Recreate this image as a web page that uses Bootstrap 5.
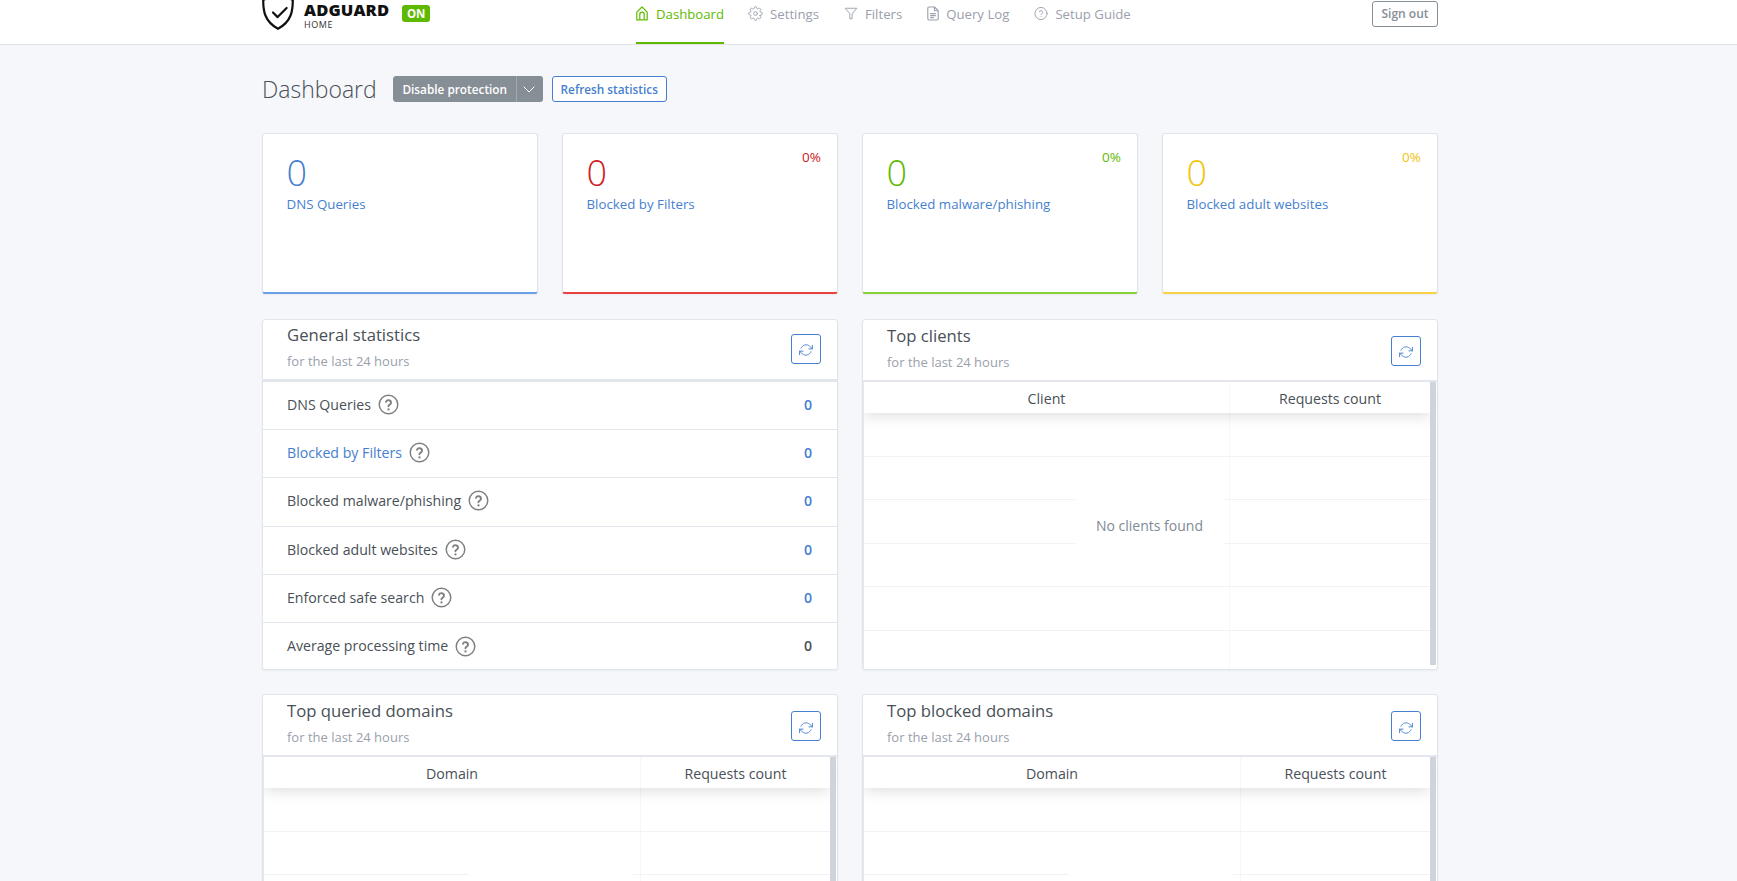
<!DOCTYPE html>
<html lang="en">
<head>
  <meta charset="UTF-8">
  <title>AdGuard Home</title>
  <link href="https://cdn.jsdelivr.net/npm/bootstrap@5.3.3/dist/css/bootstrap.min.css" rel="stylesheet">
  <style>
    html, body {
      height: 881px;
      overflow: hidden;
    }
    body {
      background: #f5f7fb;
      color: #495057;
      font-family: "Open Sans", "Liberation Sans", sans-serif;
      font-size: 14px;
    }
    .app-shell {
      width: 1700px;
    }
    .app-shell .container {
      max-width: 1200px;
    }
    .top-bar {
      height: 45px;
      background: #fff;
      border-bottom: 1px solid #dfe2ea;
      overflow: hidden;
    }
    .brand {
      width: 374px;
      color: #111;
    }
    .brand svg {
      margin-top: -5px;
    }
    .brand-text {
      margin-left: 10px;
      margin-top: 1px;
    }
    .brand-name {
      font-size: 16.6px;
      font-weight: 800;
      line-height: 17px;
      letter-spacing: .1px;
    }
    .brand-sub {
      font-size: 9px;
      line-height: 10px;
      margin-top: 2px;
      letter-spacing: .6px;
      color: #333;
    }
    .on-tag {
      margin-left: 13px;
      margin-top: 5px;
      width: 28px;
      height: 17px;
      line-height: 17px;
      text-align: center;
      background: #5eba00;
      color: #fff;
      font-size: 11.5px;
      font-weight: 700;
      border-radius: 3px;
    }
    .tab-link {
      display: flex;
      gap: 7px;
      height: 44px;
      padding-top: 5px;
      margin-right: 25px;
      color: #9aa0ac;
      font-size: 13.2px;
      line-height: 18px;
      text-decoration: none;
      border-bottom: 2px solid transparent;
    }
    .tab-link svg {
      flex: none;
      margin-top: 1px;
    }
    .tab-link.is-active {
      gap: 8px;
      margin-right: 24px;
      color: #5eba00;
      border-bottom-color: #5eba00;
    }
    .btn-out {
      margin-top: 1px;
      width: 66px;
      height: 26px;
      padding: 0;
      font-size: 12px;
      font-weight: 600;
      line-height: 24px;
      color: #868e96;
      border: 1px solid #868e96;
      border-radius: 3px;
    }
    .page-head {
      padding-top: 31px;
      margin-bottom: 31px;
      height: 57px;
    }
    .page-title {
      font-size: 23px;
      font-weight: 300;
      line-height: 26px;
      margin: 0 16px 0 0;
      color: #495057;
    }
    .btn-head {
      height: 26px;
      padding: 0;
      font-size: 11.8px;
      font-weight: 600;
      line-height: 24px;
      white-space: nowrap;
      border-radius: 3px;
    }
    .btn-disable {
      width: 124px;
      background: #868e96;
      border-color: #868e96;
      color: #fff;
    }
    .btn-caret {
      width: 27px;
      flex: none !important;
      background: #868e96;
      border-color: #868e96;
      border-left-color: #a2a8af;
      color: #fff;
    }
    .btn-refresh-all {
      width: 115px;
      margin-left: 9px;
      color: #467fcf;
      border: 1px solid #467fcf;
      background: #fff;
    }
    .panel {
      border: 1px solid #e0e4ec;
      border-radius: 3px;
      box-shadow: 0 1px 2px rgba(0, 0, 0, .05);
    }
    .tile-row {
      margin-bottom: 25px;
    }
    .tile {
      height: 161px;
      border-bottom-width: 2px;
    }
    .tile-body {
      padding: 14px 16px 0 23.5px;
    }
    .tile-num {
      font-size: 36px;
      font-weight: 350;
      line-height: 40px;
      margin-top: 5px;
    }
    .tile-label {
      color: #467fcf;
      font-size: 13.3px;
      line-height: 22px;
    }
    .tile-pct {
      font-size: 13.5px;
      line-height: 18px;
    }
    .tone-blue { color: #467fcf; border-bottom-color: #6ba0e6; }
    .tone-red { color: #cd201f; border-bottom-color: #e8413f; }
    .tone-green { color: #5eba00; border-bottom-color: #87d13a; }
    .tone-yellow { color: #f1c40f; border-bottom-color: #f8d347; }
    .box-row {
      margin-bottom: 24.3px;
    }
    .box {
      height: 351px;
      overflow: hidden;
    }
    .box-head {
      flex: none;
      height: 62px;
      padding: 5px 16px 0 24px;
      border-bottom: 2px solid #e3e6ec;
    }
    .box-head.is-tight {
      height: 61px;
      padding-top: 4px;
    }
    .box-head.is-tight .btn-refresh {
      margin-top: 10px;
    }
    .box-title {
      font-size: 16.7px;
      font-weight: 400;
      line-height: 22px;
      margin: 0;
    }
    .box-sub {
      color: #9aa0ac;
      font-size: 13px;
      line-height: 18px;
      margin-top: 6px;
    }
    .btn-refresh {
      width: 30px;
      height: 30px;
      margin-top: 11px;
      padding: 0;
      border: 1px solid #467fcf;
      border-radius: 3px;
      color: #467fcf;
      background: #fff;
      line-height: 1;
    }
    .stat-item {
      height: 48.2px;
      padding: 0 25px 2px 24px;
      border-color: #e3e6ec;
      color: #495057;
      font-size: 14.15px;
    }
    .stat-item.is-link .stat-name {
      color: #467fcf;
    }
    .stat-name {
      margin-right: 7px;
    }
    .hint-icon {
      color: #808080;
    }
    .stat-val {
      color: #467fcf;
      font-weight: 600;
    }
    .stat-val.is-plain {
      color: #495057;
    }
    .tbl-area {
      height: 287px;
      border-left: 1px solid #e6e8ec;
      overflow: hidden;
    }
    .tbl-scroll {
      width: 566px;
      flex: none;
    }
    .tbl-thumb {
      flex: none;
      width: 6px;
      height: 283px;
      background: #cfd3da;
      position: relative;
      z-index: 3;
    }
    .tbl-top {
      table-layout: fixed;
      border-collapse: separate;
      border-spacing: 0;
      margin: 0;
    }
    .tbl-top > :not(caption) > * > * {
      padding: 0;
      color: #495057;
      font-size: 14.2px;
      font-weight: 400;
      text-align: center;
      border-bottom: 1px solid #f1f2f4;
    }
    .tbl-top thead tr {
      position: relative;
      z-index: 2;
      box-shadow: 0 2px 15px rgba(0, 0, 0, .15);
    }
    .tbl-top > thead > tr > th {
      height: 31px;
      padding-top: 2px;
      line-height: 29px;
      border-bottom: 0;
      background: #fff;
    }
    .tbl-top td {
      height: 43.5px;
    }
    .tbl-top tr > :last-child {
      border-left: 1px solid #f7f7f9;
    }
    .col-client { width: 365px; }
    .col-domain { width: 376px; }
    .empty-note {
      position: absolute;
      top: 117px;
      height: 45px;
      padding-top: 14px;
      background: #fff;
      color: #7f8a96;
      text-align: center;
      line-height: 26px;
      z-index: 1;
    }
    .empty-client { left: 211px; width: 149px; }
    .empty-domain { left: 205px; width: 164px; }
  </style>
</head>
<body>

<svg width="0" height="0" class="position-absolute">
  <symbol id="i-refresh" viewBox="0 0 24 24" fill="none" stroke="currentColor" stroke-width="1.6" stroke-linecap="round" stroke-linejoin="round">
    <polyline points="23 4 23 10 17 10"/>
    <polyline points="1 20 1 14 7 14"/>
    <path d="M3.51 9a9 9 0 0 1 14.85-3.36L23 10M1 14l4.64 4.36A9 9 0 0 0 20.49 15"/>
  </symbol>
  <symbol id="i-help" viewBox="0 0 24 24" fill="none" stroke="currentColor" stroke-width="1.7" stroke-linecap="round" stroke-linejoin="round">
    <circle cx="12" cy="12" r="10.6"/>
    <path d="M9.1 9a3 3 0 0 1 5.8 1c0 2-3 2.6-3 4" stroke-width="2.1"/>
    <path d="M12 17.6h.01" stroke-width="2.6"/>
  </symbol>
</svg>

<header class="top-bar">
  <div class="app-shell">
    <div class="container d-flex align-items-start">
      <div class="brand d-flex align-items-start">
        <svg width="32" height="35" viewBox="0 0 32 35" fill="none" stroke="#111" stroke-width="2.2" stroke-linejoin="round" stroke-linecap="round">
          <path d="M16 1.2C10 1.2 5 3 1.2 5c0 10 .8 21 14.8 28.8C30 26 30.8 15 30.8 5 27 3 22 1.2 16 1.2z"/>
          <path d="M11 17.5l4.6 4.6 9-9.1"/>
        </svg>
        <div class="brand-text">
          <div class="brand-name">ADGUARD</div>
          <div class="brand-sub">HOME</div>
        </div>
        <span class="on-tag">ON</span>
      </div>
      <nav class="d-flex">
        <a class="tab-link is-active" href="#">
          <svg width="12" height="15" viewBox="0 0 12 15" fill="none" stroke="currentColor" stroke-width="1.2" stroke-linejoin="round"><path d="M.8 6.2L6 1l5.2 5.2v7.6H.8z"/><path d="M3.8 13.8V8.4a2.2 2.2 0 0 1 4.4 0v5.4"/></svg>
          Dashboard
        </a>
        <a class="tab-link" href="#">
          <svg width="15" height="15" viewBox="0 0 24 24" fill="none" stroke="currentColor" stroke-width="1.5" stroke-linecap="round" stroke-linejoin="round"><circle cx="12" cy="12" r="3"/><path d="M19.4 15a1.65 1.65 0 0 0 .33 1.82l.06.06a2 2 0 0 1 0 2.83 2 2 0 0 1-2.83 0l-.06-.06a1.65 1.65 0 0 0-1.82-.33 1.65 1.65 0 0 0-1 1.51V21a2 2 0 0 1-2 2 2 2 0 0 1-2-2v-.09A1.65 1.65 0 0 0 9 19.4a1.65 1.65 0 0 0-1.82.33l-.06.06a2 2 0 0 1-2.83 0 2 2 0 0 1 0-2.83l.06-.06a1.65 1.65 0 0 0 .33-1.82 1.65 1.65 0 0 0-1.51-1H3a2 2 0 0 1-2-2 2 2 0 0 1 2-2h.09A1.65 1.65 0 0 0 4.6 9a1.65 1.65 0 0 0-.33-1.82l-.06-.06a2 2 0 0 1 0-2.83 2 2 0 0 1 2.83 0l.06.06a1.65 1.65 0 0 0 1.82.33H9a1.65 1.65 0 0 0 1-1.51V3a2 2 0 0 1 2-2 2 2 0 0 1 2 2v.09a1.65 1.65 0 0 0 1 1.51 1.65 1.65 0 0 0 1.82-.33l.06-.06a2 2 0 0 1 2.83 0 2 2 0 0 1 0 2.83l-.06.06a1.65 1.65 0 0 0-.33 1.82V9a1.65 1.65 0 0 0 1.51 1H21a2 2 0 0 1 2 2 2 2 0 0 1-2 2h-.09a1.65 1.65 0 0 0-1.51 1z"/></svg>
          Settings
        </a>
        <a class="tab-link" href="#">
          <svg width="14" height="15" viewBox="0 0 24 24" fill="none" stroke="currentColor" stroke-width="1.6" stroke-linejoin="round"><polygon points="22 3 2 3 10 12.46 10 21 14 21 14 12.46 22 3"/></svg>
          Filters
        </a>
        <a class="tab-link" href="#">
          <svg width="12" height="15" viewBox="0 0 12 15" fill="none" stroke="currentColor" stroke-width="1.1" stroke-linejoin="round"><path d="M7.5 1H2a1.2 1.2 0 0 0-1.2 1.2v10.6A1.2 1.2 0 0 0 2 14h8a1.2 1.2 0 0 0 1.2-1.2V4.7z"/><path d="M7.5 1v3.7h3.7M3.2 7.6h5.6M3.2 9.6h5.6M3.2 11.6h3.6"/></svg>
          Query Log
        </a>
        <a class="tab-link" href="#">
          <svg width="14" height="15" viewBox="0 0 24 24" fill="none" stroke="currentColor" stroke-width="1.6" stroke-linecap="round" stroke-linejoin="round"><circle cx="12" cy="12" r="10.4"/><path d="M9.1 9a3 3 0 0 1 5.8 1c0 2-3 2.6-3 4"/><path d="M12 17.4h.01"/></svg>
          Setup Guide
        </a>
      </nav>
      <button type="button" class="btn btn-out ms-auto">Sign out</button>
    </div>
  </div>
</header>

<div class="app-shell">
  <main class="container">
    <div class="page-head d-flex align-items-start">
      <h1 class="page-title">Dashboard</h1>
      <div class="btn-group">
        <button type="button" class="btn btn-head btn-disable">Disable protection</button>
        <button type="button" class="btn btn-head btn-caret">
          <svg width="12" height="7" viewBox="0 0 12 7" fill="none" stroke="currentColor" stroke-width="1" class="d-block mx-auto"><path d="M.7.7L6 6l5.3-5.3"/></svg>
        </button>
      </div>
      <button type="button" class="btn btn-head btn-refresh-all">Refresh statistics</button>
    </div>

    <div class="row gx-4 tile-row">
      <div class="col-3">
        <div class="card panel tile tone-blue">
          <div class="tile-body d-flex justify-content-between">
            <div>
              <div class="tile-num tone-blue">0</div>
              <div class="tile-label">DNS Queries</div>
            </div>
          </div>
        </div>
      </div>
      <div class="col-3">
        <div class="card panel tile tone-red">
          <div class="tile-body d-flex justify-content-between">
            <div>
              <div class="tile-num tone-red">0</div>
              <div class="tile-label">Blocked by Filters</div>
            </div>
            <div class="tile-pct tone-red">0%</div>
          </div>
        </div>
      </div>
      <div class="col-3">
        <div class="card panel tile tone-green">
          <div class="tile-body d-flex justify-content-between">
            <div>
              <div class="tile-num tone-green">0</div>
              <div class="tile-label">Blocked malware/phishing</div>
            </div>
            <div class="tile-pct tone-green">0%</div>
          </div>
        </div>
      </div>
      <div class="col-3">
        <div class="card panel tile tone-yellow">
          <div class="tile-body d-flex justify-content-between">
            <div>
              <div class="tile-num tone-yellow">0</div>
              <div class="tile-label">Blocked adult websites</div>
            </div>
            <div class="tile-pct tone-yellow">0%</div>
          </div>
        </div>
      </div>
    </div>

    <div class="row gx-4 box-row">
      <div class="col-6">
        <div class="card panel box">
          <div class="box-head is-tight d-flex justify-content-between align-items-start">
            <div>
              <h2 class="box-title">General statistics</h2>
              <div class="box-sub">for the last 24 hours</div>
            </div>
            <button type="button" class="btn btn-refresh"><svg width="14" height="14"><use href="#i-refresh"/></svg></button>
          </div>
          <ul class="list-group list-group-flush">
            <li class="list-group-item stat-item d-flex align-items-center">
              <span class="stat-name">DNS Queries</span>
              <svg class="hint-icon" width="21" height="21"><use href="#i-help"/></svg>
              <span class="stat-val ms-auto">0</span>
            </li>
            <li class="list-group-item stat-item is-link d-flex align-items-center">
              <span class="stat-name">Blocked by Filters</span>
              <svg class="hint-icon" width="21" height="21"><use href="#i-help"/></svg>
              <span class="stat-val ms-auto">0</span>
            </li>
            <li class="list-group-item stat-item d-flex align-items-center">
              <span class="stat-name">Blocked malware/phishing</span>
              <svg class="hint-icon" width="21" height="21"><use href="#i-help"/></svg>
              <span class="stat-val ms-auto">0</span>
            </li>
            <li class="list-group-item stat-item d-flex align-items-center">
              <span class="stat-name">Blocked adult websites</span>
              <svg class="hint-icon" width="21" height="21"><use href="#i-help"/></svg>
              <span class="stat-val ms-auto">0</span>
            </li>
            <li class="list-group-item stat-item d-flex align-items-center">
              <span class="stat-name">Enforced safe search</span>
              <svg class="hint-icon" width="21" height="21"><use href="#i-help"/></svg>
              <span class="stat-val ms-auto">0</span>
            </li>
            <li class="list-group-item stat-item d-flex align-items-center">
              <span class="stat-name">Average processing time</span>
              <svg class="hint-icon" width="21" height="21"><use href="#i-help"/></svg>
              <span class="stat-val is-plain ms-auto">0</span>
            </li>
          </ul>
        </div>
      </div>

      <div class="col-6">
        <div class="card panel box">
          <div class="box-head d-flex justify-content-between align-items-start">
            <div>
              <h2 class="box-title">Top clients</h2>
              <div class="box-sub">for the last 24 hours</div>
            </div>
            <button type="button" class="btn btn-refresh"><svg width="14" height="14"><use href="#i-refresh"/></svg></button>
          </div>
          <div class="tbl-area d-flex position-relative">
            <div class="tbl-scroll">
              <table class="table tbl-top">
                <colgroup><col class="col-client"><col></colgroup>
                <thead><tr><th>Client</th><th>Requests count</th></tr></thead>
                <tbody>
                  <tr><td></td><td></td></tr>
                  <tr><td></td><td></td></tr>
                  <tr><td></td><td></td></tr>
                  <tr><td></td><td></td></tr>
                  <tr><td></td><td></td></tr>
                  <tr><td></td><td></td></tr>
                </tbody>
              </table>
            </div>
            <div class="tbl-thumb"></div>
            <div class="empty-note empty-client">No clients found</div>
          </div>
        </div>
      </div>
    </div>

    <div class="row gx-4 box-row">
      <div class="col-6">
        <div class="card panel box">
          <div class="box-head d-flex justify-content-between align-items-start">
            <div>
              <h2 class="box-title">Top queried domains</h2>
              <div class="box-sub">for the last 24 hours</div>
            </div>
            <button type="button" class="btn btn-refresh"><svg width="14" height="14"><use href="#i-refresh"/></svg></button>
          </div>
          <div class="tbl-area d-flex position-relative">
            <div class="tbl-scroll">
              <table class="table tbl-top">
                <colgroup><col class="col-domain"><col></colgroup>
                <thead><tr><th>Domain</th><th>Requests count</th></tr></thead>
                <tbody>
                  <tr><td></td><td></td></tr>
                  <tr><td></td><td></td></tr>
                  <tr><td></td><td></td></tr>
                  <tr><td></td><td></td></tr>
                  <tr><td></td><td></td></tr>
                  <tr><td></td><td></td></tr>
                </tbody>
              </table>
            </div>
            <div class="tbl-thumb"></div>
            <div class="empty-note empty-domain"></div>
          </div>
        </div>
      </div>

      <div class="col-6">
        <div class="card panel box">
          <div class="box-head d-flex justify-content-between align-items-start">
            <div>
              <h2 class="box-title">Top blocked domains</h2>
              <div class="box-sub">for the last 24 hours</div>
            </div>
            <button type="button" class="btn btn-refresh"><svg width="14" height="14"><use href="#i-refresh"/></svg></button>
          </div>
          <div class="tbl-area d-flex position-relative">
            <div class="tbl-scroll">
              <table class="table tbl-top">
                <colgroup><col class="col-domain"><col></colgroup>
                <thead><tr><th>Domain</th><th>Requests count</th></tr></thead>
                <tbody>
                  <tr><td></td><td></td></tr>
                  <tr><td></td><td></td></tr>
                  <tr><td></td><td></td></tr>
                  <tr><td></td><td></td></tr>
                  <tr><td></td><td></td></tr>
                  <tr><td></td><td></td></tr>
                </tbody>
              </table>
            </div>
            <div class="tbl-thumb"></div>
            <div class="empty-note empty-domain"></div>
          </div>
        </div>
      </div>
    </div>
  </main>
</div>

<script src="https://cdn.jsdelivr.net/npm/bootstrap@5.3.3/dist/js/bootstrap.bundle.min.js"></script>
</body>
</html>
